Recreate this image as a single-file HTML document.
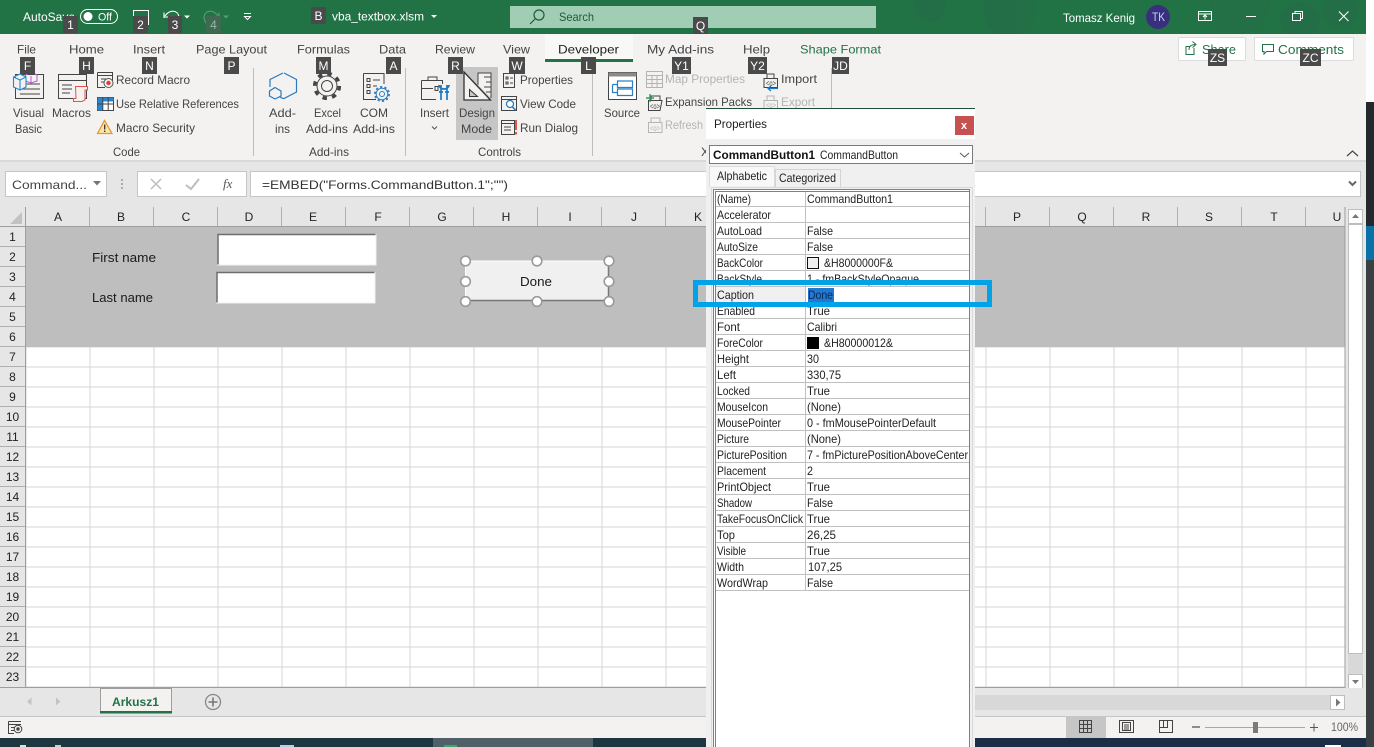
<!DOCTYPE html>
<html lang="en"><head><meta charset="utf-8"><title>Excel - vba_textbox.xlsm</title>
<style>
html,body{margin:0;padding:0;width:1374px;height:747px;overflow:hidden;background:#f3f2f1}
svg{display:block}
text{font-family:"Liberation Sans",sans-serif;font-size:12px;fill:#444;white-space:pre}
.w text,text.w{fill:#fff}
.g text{fill:#b4b4b4}
.p text{fill:#222}
.h text{fill:#222;text-anchor:middle}
.k rect{fill:#4a4a4a}
.k text{fill:#fff;text-anchor:middle;font-size:12px}
.i{fill:none;stroke:#444;stroke-width:1}
.b{fill:none;stroke:#2a80c8;stroke-width:1.2}
.n{fill:none;stroke:#b4b4b4;stroke-width:1}
</style></head><body>
<svg width="1374" height="747" viewBox="0 0 1374 747" xmlns="http://www.w3.org/2000/svg">
<defs>
<pattern id="grid" patternUnits="userSpaceOnUse" x="25.5" y="226.5" width="64" height="20"><path d="M0 .5H64M.5 0V20" stroke="#d4d4d4" fill="none"/></pattern>
</defs>
<!-- right desktop edge -->
<rect x="1366" y="0" width="8" height="102" fill="#fff"/>
<rect x="1366" y="102" width="8" height="645" fill="#22282c"/>
<rect x="1366" y="226" width="8" height="34" fill="#0a70a8"/>
<rect x="1366" y="260" width="8" height="487" fill="#3a3f44"/>
<!-- title bar -->
<rect width="1366" height="34" fill="#217346"/>
<g fill="#246e46" opacity=".8"><circle cx="1010" cy="10" r="26"/><circle cx="1240" cy="4" r="30"/><circle cx="1300" cy="22" r="20"/><circle cx="1340" cy="10" r="18"/><circle cx="930" cy="6" r="16"/></g>
<text class="w" x="23" y="21" textLength="52" lengthAdjust="spacingAndGlyphs">AutoSave</text>
<rect x="80.5" y="9.5" width="37" height="14" rx="7" fill="none" stroke="#fff"/>
<circle cx="88" cy="16.5" r="4.5" fill="#fff"/>
<text class="w" x="98" y="20.5" font-size="11" style="font-size:11px" textLength="14" lengthAdjust="spacingAndGlyphs">Off</text>
<path d="M133.500 25V10.500H148.500V25" fill="none" stroke="#fff"/>
<path d="M164 12.500V18M164 17H171M165 16C170 9 178 10 179 17C179 20 178 22 176 24" fill="none" stroke="#fff" stroke-width="1.100"/>
<path d="M184 15.500H190L187 18.500Z" fill="#fff"/>
<path d="M219 12.500V18M219 17H212M218 16C213 9 205 10 204 17C204 20 205 22 207 24" fill="none" stroke="#5e9a79" stroke-width="1.100"/>
<path d="M223 15.500H229L226 18.500Z" fill="#5e9a79"/>
<path d="M244 13.500H251" stroke="#fff"/>
<path d="M244.500 16.500H250.500L247.500 19.500Z" fill="none" stroke="#fff"/>
<text class="w" x="332" y="20.500" textLength="92" lengthAdjust="spacingAndGlyphs">vba_textbox.xlsm</text>
<path d="M431 15H437L434 18Z" fill="#fff"/>
<rect x="510" y="6" width="366" height="22" fill="#a1cdb5"/>
<circle cx="539" cy="15" r="5" fill="none" stroke="#1d5c3a" stroke-width="1.200"/><path d="M535 19L530 24" stroke="#1d5c3a" stroke-width="1.200"/>
<text x="559" y="21" textLength="35" lengthAdjust="spacingAndGlyphs" style="fill:#1d5c3a">Search</text>
<text class="w" x="1063" y="22" textLength="72" lengthAdjust="spacingAndGlyphs">Tomasz Kenig</text>
<circle cx="1158" cy="17" r="12" fill="#3a2f7e"/>
<text x="1152" y="21" textLength="13" lengthAdjust="spacingAndGlyphs" style="fill:#bcd8f2">TK</text>
<path d="M1198.500 11.500H1211.500V20.500H1198.500ZM1198.500 14H1211.500M1205 19.500V15.500M1203 17L1205 15L1207 17" fill="none" stroke="#fff"/>
<path d="M1246 16.500H1256" stroke="#fff"/>
<path d="M1292.500 13.500H1300.500V20.500H1292.500ZM1295 13V11.500H1302.500V18.500H1301" fill="none" stroke="#fff"/>
<path d="M1339 11.500L1348.500 21M1348.500 11.500L1339 21" stroke="#fff" stroke-width="1.100"/>
<!-- ribbon -->
<rect y="34" width="1366" height="126" fill="#f3f2f1"/>
<rect y="160" width="1366" height="5" fill="#d5d5d4"/>
<rect y="162" width="1366" height="556" fill="#e6e6e6"/>
<rect y="160" width="1366" height="2" fill="#d8d8d7"/>
<rect x="545" y="34" width="88" height="25" fill="#f8f8f6"/>
<rect x="545" y="59" width="88" height="3" fill="#217346"/>
<g>
<text x="17" y="53.500" textLength="19" lengthAdjust="spacingAndGlyphs">File</text>
<text x="69" y="53.500" textLength="35" lengthAdjust="spacingAndGlyphs">Home</text>
<text x="133" y="53.500" textLength="32" lengthAdjust="spacingAndGlyphs">Insert</text>
<text x="196" y="53.500" textLength="71" lengthAdjust="spacingAndGlyphs">Page Layout</text>
<text x="297" y="53.500" textLength="53" lengthAdjust="spacingAndGlyphs">Formulas</text>
<text x="379" y="53.500" textLength="27" lengthAdjust="spacingAndGlyphs">Data</text>
<text x="435" y="53.500" textLength="40" lengthAdjust="spacingAndGlyphs">Review</text>
<text x="503" y="53.500" textLength="27" lengthAdjust="spacingAndGlyphs">View</text>
<text x="558" y="53.500" textLength="61" lengthAdjust="spacingAndGlyphs" style="fill:#222">Developer</text>
<text x="647" y="53.500" textLength="67" lengthAdjust="spacingAndGlyphs">My Add-ins</text>
<text x="743" y="53.500" textLength="27" lengthAdjust="spacingAndGlyphs">Help</text>
<text x="800" y="53.500" textLength="81" lengthAdjust="spacingAndGlyphs" style="fill:#217346">Shape Format</text>
<text x="13" y="117" textLength="31" lengthAdjust="spacingAndGlyphs">Visual</text>
<text x="15" y="133" textLength="27" lengthAdjust="spacingAndGlyphs">Basic</text>
<text x="52" y="117" textLength="39" lengthAdjust="spacingAndGlyphs">Macros</text>
<text x="116" y="84" textLength="74" lengthAdjust="spacingAndGlyphs">Record Macro</text>
<text x="116" y="108" textLength="123" lengthAdjust="spacingAndGlyphs">Use Relative References</text>
<text x="116" y="132" textLength="79" lengthAdjust="spacingAndGlyphs">Macro Security</text>
<text x="113" y="156" textLength="27" lengthAdjust="spacingAndGlyphs">Code</text>
<text x="269" y="117" textLength="27" lengthAdjust="spacingAndGlyphs">Add-</text>
<text x="275" y="133" textLength="15" lengthAdjust="spacingAndGlyphs">ins</text>
<text x="314" y="117" textLength="27" lengthAdjust="spacingAndGlyphs">Excel</text>
<text x="306" y="133" textLength="42" lengthAdjust="spacingAndGlyphs">Add-ins</text>
<text x="360" y="117" textLength="28" lengthAdjust="spacingAndGlyphs">COM</text>
<text x="353" y="133" textLength="42" lengthAdjust="spacingAndGlyphs">Add-ins</text>
<text x="309" y="156" textLength="40" lengthAdjust="spacingAndGlyphs">Add-ins</text>
<text x="420" y="117" textLength="29" lengthAdjust="spacingAndGlyphs">Insert</text>
</g>
<rect x="456" y="67" width="42" height="73" fill="#c6c6c6"/>
<g>
<text x="459" y="117" textLength="36" lengthAdjust="spacingAndGlyphs">Design</text>
<text x="461" y="133" textLength="31" lengthAdjust="spacingAndGlyphs">Mode</text>
<text x="520" y="84" textLength="53" lengthAdjust="spacingAndGlyphs">Properties</text>
<text x="520" y="108" textLength="56" lengthAdjust="spacingAndGlyphs">View Code</text>
<text x="520" y="132" textLength="58" lengthAdjust="spacingAndGlyphs">Run Dialog</text>
<text x="478" y="156" textLength="43" lengthAdjust="spacingAndGlyphs">Controls</text>
<text x="604" y="117" textLength="36" lengthAdjust="spacingAndGlyphs">Source</text>
<text x="665" y="106" textLength="87" lengthAdjust="spacingAndGlyphs">Expansion Packs</text>
<text x="781" y="83" textLength="36" lengthAdjust="spacingAndGlyphs">Import</text>
<text x="701" y="156" textLength="7">X</text>
</g>
<g class="g">
<text x="665" y="83" textLength="80" lengthAdjust="spacingAndGlyphs">Map Properties</text>
<text x="665" y="129" textLength="38" lengthAdjust="spacingAndGlyphs">Refresh</text>
<text x="781" y="106" textLength="34" lengthAdjust="spacingAndGlyphs">Export</text>
</g>
<path d="M253.500 68V156M405.500 68V156M592.500 68V156M831.500 68V112" stroke="#bdbdbd"/>
<!-- ribbon icons -->
<g>
<path class="i" d="M15.500 74.500H43.500V98.500H15.500ZM24 84H40M20 89H40M20 94H40"/>
<path d="M25.500 75L31 72L37 75V81L31 83L25.500 81ZM31 76V83" fill="none" stroke="#b25fc8"/>
<path d="M13.500 77L20 74L26 77V87L20 90L13.500 87ZM13.500 77L20 80L26 77M20 80V90" fill="#f3f2f1" stroke="#2a86d0" stroke-width="1.100"/>
<path class="i" d="M58.500 74.500H86.500V98.500H58.500ZM58.500 80.500H86.500M62 85H72M62 89H72M62 93H70"/>
<path d="M75.500 86.500H87.500V90H85V100L82 101.500H73.500V98.500H76Z" fill="#f3f2f1" stroke="#e8504a"/>
<path class="i" d="M97.500 72.500H112.500V85M97.500 72.500V87.500H105M97.500 75.500H112.500M101 79H106M101 82H104"/>
<circle cx="108.500" cy="83" r="4.500" fill="#f3f2f1" stroke="#555"/><circle cx="108.500" cy="83" r="2.200" fill="#e03c32"/>
<rect x="97.500" y="97.500" width="16" height="13" fill="#fff" stroke="#444"/>
<rect x="97.500" y="97.500" width="16" height="4" fill="#2a86d0"/><rect x="97.500" y="101.500" width="5" height="9" fill="#2a86d0"/>
<path d="M102.800 97.500V110.500M108.200 97.500V110.500M97.500 104H113.500" stroke="#444"/>
<path d="M104.500 120.500L112 133.500H97.500Z" fill="#fbe6a8" stroke="#e8963a" stroke-width="1.300"/>
<path d="M104.700 124.500V129.500M104.700 130.500V132" stroke="#333" stroke-width="1.300"/>
<path d="M284 73L296.500 79.500V92L284 98.500H283L278 96M270 87V79.500L283 73" fill="none" stroke="#2a7ac0" stroke-width="1.200"/>
<path d="M275 87.500L281 91V96L275 99L269.500 96V91Z" fill="#f3f2f1" stroke="#2a7ac0" stroke-width="1.200"/>
<circle cx="327" cy="86" r="10" fill="none" stroke="#444"/>
<circle cx="327" cy="86" r="12.300" fill="none" stroke="#444" stroke-width="3.600" stroke-dasharray="4.400 5.250"/>
<circle cx="327" cy="86" r="5.500" fill="#f3f2f1" stroke="#444"/>
<path class="i" d="M363.500 73.500H384V84M363.500 73.500V99.500H376M367 78.500H370V81.500H367ZM367 84.500H370V87.500H367ZM367 90.500H370V93.500H367ZM373 80H380M373 86H377"/>
<circle cx="382" cy="94" r="5.800" fill="#f3f2f1" stroke="#2a80c8"/>
<circle cx="382" cy="94" r="7" fill="none" stroke="#2a80c8" stroke-width="2" stroke-dasharray="2.200 2.200"/>
<circle cx="382" cy="94" r="2.500" fill="none" stroke="#2a80c8"/>
<path d="M432 124.500L434.500 127L437 124.500" fill="none" stroke="#555" transform="translate(0 2)"/>
<path class="i" d="M421.500 80.500H442.500V84M421.500 80.500V99.500H436M428 80V77H437V80M421.500 88.500H433M435 86.500H438V90.500H435Z"/>
<path d="M441 85V100M447 85V100M439 85C439 88 443 89 443 89H445C445 89 449 88 449 85M439 92H443M445 92H449" fill="none" stroke="#1c78c0" stroke-width="1.700"/>
<path d="M464 72L490.500 100H464Z" fill="#f3f2f1" stroke="#333" stroke-width="1.300"/>
<path d="M469.500 89.500L477.500 96.500H469.500Z" fill="#c6c6c6" stroke="#333"/>
<path d="M478 85V73H491V98" fill="#f3f2f1" stroke="#444"/><path d="M484 77H491M486 82H491M484 87H491M486 92H491" stroke="#444"/>
<path class="i" d="M503.500 73.500H514.500V87.500H503.500ZM506 77H508V79H506ZM506 82H508V84H506ZM510 78H513M510 83H513"/>
<path class="i" d="M501.500 96.500H516.500V110.500H501.500ZM501.500 99.500H516.500"/>
<circle cx="510" cy="104" r="3.500" fill="#fff" stroke="#1c78c0" stroke-width="1.200"/><path d="M512.500 107L516 110.500" stroke="#1c78c0" stroke-width="1.500"/>
<path class="i" d="M501.500 120.500H514.500V134.500H501.500ZM501.500 123.500H514.500M504 127H511M504 130H511"/>
<path d="M516 120V130M516 132V134.500" stroke="#e03c32" stroke-width="1.700"/>
<rect x="608.500" y="72.500" width="28" height="27" fill="#fff" stroke="#444"/>
<rect x="608.500" y="72.500" width="28" height="4" fill="#8a8a8a"/>
<path class="b" d="M617.500 81H632.500V87.500H617.500ZM617.500 89H632.500V95.500H617.500ZM612.500 84.500H617.500M612.500 84.500V92.500H617.500"/>
<path class="n" d="M646.500 71.500H662.500V87.500H646.500ZM646.500 75.500H662.500M652 75.500V87.500M657 75.500V87.500M646.500 79.500H662.500M646.500 83.500H662.500"/>
<path class="i" d="M648.500 100.500H662L660 110.500H648.500ZM651 100V96H660V100"/>
<text x="650" y="109" style="font-size:8px;fill:#444" textLength="10" lengthAdjust="spacingAndGlyphs">&lt;o&gt;</text>
<path d="M650 94V102M646 98H654" stroke="#2e9e5b" stroke-width="1.400"/>
<path class="n" d="M648.500 122.500H662V132.500H648.500ZM651 122V118H660V122"/>
<text x="650" y="131" style="font-size:8px;fill:#b4b4b4" textLength="10" lengthAdjust="spacingAndGlyphs">&lt;o&gt;</text>
<path class="i" d="M764 78.500H777.500V87.500H764ZM767 78V74H774V78"/>
<text x="766" y="86" style="font-size:8px;fill:#444" textLength="10" lengthAdjust="spacingAndGlyphs">&lt;o&gt;</text>
<path d="M778 88.500H768M771 86L768 88.500L771 91" fill="none" stroke="#1c78c0" stroke-width="1.200"/>
<path class="n" d="M764 100.500H777.500V109.500H764ZM767 100V96H774V100"/>
<text x="766" y="108" style="font-size:8px;fill:#b4b4b4" textLength="10" lengthAdjust="spacingAndGlyphs">&lt;o&gt;</text>
</g>
<!-- share / comments -->
<rect x="1178.500" y="37.500" width="67" height="23" rx="1" fill="#fff" stroke="#dcdcdc"/>
<rect x="1254.500" y="37.500" width="99" height="23" rx="1" fill="#fff" stroke="#dcdcdc"/>
<path d="M1194 48V54.500H1186V46.500H1190M1189 50C1189 46 1192 44.500 1195 44.500M1192.500 41.500L1196 44.500L1192.500 47.500" fill="none" stroke="#217346"/>
<path d="M1262.500 44.500H1273.500V51.500H1266.500L1264 54V51.500H1262.500Z" fill="none" stroke="#217346"/>
<text x="1202" y="54" textLength="34" lengthAdjust="spacingAndGlyphs" style="fill:#217346;font-size:13px">Share</text>
<text x="1278" y="54" textLength="66" lengthAdjust="spacingAndGlyphs" style="fill:#217346;font-size:13px">Comments</text>
<path d="M1347 156L1352.500 151L1358 156" fill="none" stroke="#444" stroke-width="1.200"/>
<!-- formula bar -->
<rect x="5.500" y="171.500" width="101" height="25" fill="#fff" stroke="#c6c6c6"/>
<text x="12" y="189" textLength="75" lengthAdjust="spacingAndGlyphs">Command...</text>
<path d="M93 181H101L97 185.500Z" fill="#777"/>
<path d="M122 179V181M122 183V185M122 187V189" stroke="#aaa" stroke-width="2"/>
<rect x="137.500" y="171.500" width="109" height="25" fill="#fff" stroke="#c6c6c6"/>
<path d="M151 179L161 189M161 179L151 189" stroke="#bdbdbd" stroke-width="1.500"/>
<path d="M186 185L191 189L199 179" fill="none" stroke="#bdbdbd" stroke-width="2"/>
<text x="223" y="188" style="font-family:'Liberation Serif',serif;font-style:italic;font-size:13px;fill:#555">fx</text>
<rect x="250.500" y="171.500" width="1110" height="25" fill="#fff" stroke="#c6c6c6"/>
<text x="262" y="189" textLength="246" lengthAdjust="spacingAndGlyphs" style="fill:#333">=EMBED("Forms.CommandButton.1";"")</text>
<path d="M1349 181.500L1352.500 185L1356 181.500" fill="none" stroke="#666" stroke-width="2"/>
<!-- sheet -->
<rect x="26" y="227" width="1319" height="460" fill="#fff"/>
<rect x="26" y="227" width="1319" height="460" fill="url(#grid)"/>
<rect x="26" y="227" width="1319" height="120" fill="#bebebe"/>
<path d="M1345 207V687.500H0" fill="none" stroke="#9e9e9e"/>
<path d="M0 226.500H1345M25.500 207V687" stroke="#9e9e9e" fill="none"/>
<path d="M89.500 207V226M153.500 207V226M217.500 207V226M281.500 207V226M345.500 207V226M409.500 207V226M473.500 207V226M537.500 207V226M601.500 207V226M665.500 207V226M985.500 207V226M1049.500 207V226M1113.500 207V226M1177.500 207V226M1241.500 207V226M1305.500 207V226" stroke="#b0b0b0"/>
<path d="M0 246.500H25M0 266.500H25M0 286.500H25M0 306.500H25M0 326.500H25M0 346.500H25M0 366.500H25M0 386.500H25M0 406.500H25M0 426.500H25M0 446.500H25M0 466.500H25M0 486.500H25M0 506.500H25M0 526.500H25M0 546.500H25M0 566.500H25M0 586.500H25M0 606.500H25M0 626.500H25M0 646.500H25M0 666.500H25" stroke="#b0b0b0"/>
<path d="M22 212V224H10Z" fill="#c2c2c2"/>
<g class="h">
<text x="58" y="221">A</text><text x="121" y="221">B</text><text x="186" y="221">C</text><text x="249" y="221">D</text><text x="313" y="221">E</text><text x="378" y="221">F</text><text x="442" y="221">G</text><text x="506" y="221">H</text><text x="570" y="221">I</text><text x="634" y="221">J</text><text x="698" y="221">K</text><text x="1017" y="221">P</text><text x="1082" y="221">Q</text><text x="1146" y="221">R</text><text x="1209" y="221">S</text><text x="1274" y="221">T</text><text x="1337" y="221">U</text>
<text x="12.500" y="241">1</text><text x="12.500" y="261">2</text><text x="12.500" y="281">3</text><text x="12.500" y="301">4</text><text x="12.500" y="321">5</text><text x="12.500" y="341">6</text><text x="12.500" y="361">7</text><text x="12.500" y="381">8</text><text x="12.500" y="401">9</text><text x="12.500" y="421">10</text><text x="12.500" y="441">11</text><text x="12.500" y="461">12</text><text x="12.500" y="481">13</text><text x="12.500" y="501">14</text><text x="12.500" y="521">15</text><text x="12.500" y="541">16</text><text x="12.500" y="561">17</text><text x="12.500" y="581">18</text><text x="12.500" y="601">19</text><text x="12.500" y="621">20</text><text x="12.500" y="641">21</text><text x="12.500" y="661">22</text><text x="12.500" y="681">23</text>
</g>
<!-- controls on sheet -->
<text x="92" y="262" textLength="64" lengthAdjust="spacingAndGlyphs" style="font-size:13px;fill:#1a1a1a">First name</text>
<text x="92" y="302" textLength="61" lengthAdjust="spacingAndGlyphs" style="font-size:13px;fill:#1a1a1a">Last name</text>
<rect x="218" y="235" width="158" height="30" fill="#fff"/>
<path d="M218 264.500V234.500H375.500" fill="none" stroke="#6e6e6e" stroke-width="1.500"/>
<path d="M217 265H376V234" fill="none" stroke="#f0f0f0" stroke-width="1"/>
<rect x="217" y="273" width="158" height="30" fill="#fff"/>
<path d="M217 302.500V272.500H374.500" fill="none" stroke="#6e6e6e" stroke-width="1.500"/>
<path d="M216 303H375V272" fill="none" stroke="#f0f0f0" stroke-width="1"/>
<rect x="465.500" y="261" width="143" height="40" fill="#f0f0f0"/>
<path d="M465.500 301V261H608" fill="none" stroke="#fff" stroke-width="1"/>
<path d="M465.500 300.500H608.500V261" fill="none" stroke="#777" stroke-width="1.500"/>
<text x="520" y="286" textLength="32" lengthAdjust="spacingAndGlyphs" style="font-size:13px;fill:#1a1a1a">Done</text>
<g fill="#fff" stroke="#9a9a9a" stroke-width="1.600">
<circle cx="465.500" cy="261" r="4.800"/><circle cx="537" cy="261" r="4.800"/><circle cx="609" cy="261" r="4.800"/>
<circle cx="465.500" cy="281.500" r="4.800"/><circle cx="609" cy="281.500" r="4.800"/>
<circle cx="465.500" cy="301.500" r="4.800"/><circle cx="537" cy="301.500" r="4.800"/><circle cx="609" cy="301.500" r="4.800"/>
</g>
<!-- vertical scrollbar -->
<rect x="1348" y="209" width="15" height="480" fill="#d8d8d8"/>
<rect x="1348.500" y="209.500" width="14" height="14" fill="#fff" stroke="#bdbdbd"/>
<rect x="1348.500" y="224.500" width="14" height="429" fill="#fff" stroke="#bdbdbd"/>
<rect x="1348.500" y="674.500" width="14" height="14" fill="#fff" stroke="#bdbdbd"/>
<path d="M1352 218H1359L1355.500 214Z" fill="#777"/>
<path d="M1352 680H1359L1355.500 684Z" fill="#777"/>
<!-- sheet tabs -->
<rect x="0" y="688" width="1366" height="28" fill="#e6e6e6"/>
<path d="M0 687.500H100" stroke="#9e9e9e"/>
<path d="M172 687.500H1345" stroke="#9e9e9e"/>
<path d="M100.500 712V688.500H171.500V712" fill="#f3f2f1" stroke="#9e9e9e"/>
<rect x="100" y="711" width="72" height="2.500" fill="#217346"/>
<text x="112" y="706" textLength="47" lengthAdjust="spacingAndGlyphs" style="font-weight:bold;fill:#217346">Arkusz1</text>
<path d="M31.500 697.500V705.500L27 701.500Z" fill="#c4c4c4"/><path d="M56 697.500V705.500L60.500 701.500Z" fill="#c4c4c4"/>
<circle cx="213" cy="702" r="7.500" fill="none" stroke="#888" stroke-width="1.300"/>
<path d="M213 697.500V706.500M208.500 702H217.500" stroke="#777" stroke-width="1.600"/>
<rect x="975" y="695" width="355" height="15" fill="#d8d8d8"/>
<rect x="1330.500" y="695.500" width="14" height="14" fill="#fff" stroke="#bdbdbd"/>
<path d="M1336 698.500V706.500L1340.500 702.500Z" fill="#777"/>
<!-- status bar -->
<rect x="0" y="716" width="1366" height="22" fill="#f3f2f1"/>
<path d="M0 716.500H1366" stroke="#c6c6c6"/>
<path class="i" d="M8.500 721.500H21M8.500 721.500V733.500H14M8.500 724.500H21M11 727.500H14M11 730.500H14"/>
<circle cx="18" cy="729" r="3.800" fill="none" stroke="#444"/><circle cx="18" cy="729" r="1.700" fill="#444"/>
<rect x="1066" y="717" width="40" height="21" fill="#c6c6c6"/>
<path class="i" d="M1079.500 720.500H1091.500V732.500H1079.500ZM1083.500 720.500V732.500M1087.500 720.500V732.500M1079.500 724.500H1091.500M1079.500 728.500H1091.500"/>
<path class="i" d="M1119.500 720.500H1133.500V732.500H1119.500ZM1122.500 722.500H1130.500V730.500H1122.500ZM1124 725H1129M1124 727H1129M1124 729H1129"/>
<path class="i" d="M1159.500 720.500H1172.500V732.500H1159.500ZM1159.500 727.500H1167.500V720.500M1163.500 720.500V727.500"/>
<path d="M1192 727H1200" stroke="#555" stroke-width="1.300"/>
<path d="M1205 727.500H1305" stroke="#a8a8a8"/>
<rect x="1253" y="722" width="5" height="11" fill="#7a7a7a"/>
<path d="M1310 727.500H1318M1314 723.500V731.500" stroke="#555" stroke-width="1"/>
<text x="1331" y="731" textLength="27" lengthAdjust="spacingAndGlyphs" style="fill:#666">100%</text>
<!-- taskbar -->
<rect x="0" y="738" width="706" height="9" fill="#1e3640"/>
<rect x="433" y="738" width="160" height="9" fill="#4f6068"/>
<rect x="975" y="738" width="391" height="9" fill="#1c2e45"/>
<rect x="1325" y="745" width="16" height="2" fill="#fff"/>
<rect x="20" y="745" width="6" height="2" fill="#ddd"/><rect x="55" y="745" width="6" height="2" fill="#ccc"/><rect x="280" y="745" width="14" height="2" fill="#b8cdea"/><rect x="444" y="745" width="13" height="2" fill="#3aa76d"/>
<!-- properties window -->
<rect x="706" y="108" width="269" height="639" fill="#f0f0f0"/>
<rect x="706" y="108" width="269" height="1" fill="#1f4f38"/>
<rect x="706" y="109" width="269" height="30" fill="#fff"/>
<text x="714" y="128" textLength="53" lengthAdjust="spacingAndGlyphs" style="fill:#222">Properties</text>
<rect x="955" y="116" width="19" height="19" fill="#c75050"/>
<text x="961" y="129" style="fill:#fff;font-weight:bold;font-size:11px">x</text>
<rect x="709.500" y="145.500" width="263" height="18" fill="#fff" stroke="#7a7a7a"/>
<text x="713" y="159" textLength="102" lengthAdjust="spacingAndGlyphs" style="font-weight:bold;fill:#111">CommandButton1</text>
<text x="820" y="159" textLength="78" lengthAdjust="spacingAndGlyphs" style="fill:#222">CommandButton</text>
<path d="M960 153L964.500 157L969 153" fill="none" stroke="#555"/>
<path d="M775.500 187V169.500H840.500V187" fill="#f0f0f0" stroke="#d4d4d4"/>
<path d="M709.500 187V166.500H774.500V187" fill="#f8f8f8" stroke="#dcdcdc"/>
<rect x="710" y="186" width="64" height="2" fill="#f0f0f0"/>
<text x="717" y="180" textLength="50" lengthAdjust="spacingAndGlyphs" style="fill:#222">Alphabetic</text>
<text x="779" y="182" textLength="57" lengthAdjust="spacingAndGlyphs" style="fill:#222">Categorized</text>
<rect x="711.500" y="187.500" width="261" height="560" fill="none" stroke="#dadada"/>
<rect x="713.500" y="189.500" width="256" height="560" fill="#fff" stroke="#808080"/>
<rect x="715.500" y="191.500" width="254" height="560" fill="#fff" stroke="#808080"/>
<rect x="716" y="287" width="89" height="16" fill="#f0f0f0"/>
<path d="M716 206.500H969M716 222.500H969M716 238.500H969M716 254.500H969M716 270.500H969M716 286.500H969M716 302.500H969M716 318.500H969M716 334.500H969M716 350.500H969M716 366.500H969M716 382.500H969M716 398.500H969M716 414.500H969M716 430.500H969M716 446.500H969M716 462.500H969M716 478.500H969M716 494.500H969M716 510.500H969M716 526.500H969M716 542.500H969M716 558.500H969M716 574.500H969M716 590.500H969M805.500 192V590" stroke="#c0c0c0" fill="none"/>
<g class="p">
<text x="717" y="203" textLength="34" lengthAdjust="spacingAndGlyphs">(Name)</text>
<text x="717" y="219" textLength="54" lengthAdjust="spacingAndGlyphs">Accelerator</text>
<text x="717" y="235" textLength="45" lengthAdjust="spacingAndGlyphs">AutoLoad</text>
<text x="717" y="251" textLength="41" lengthAdjust="spacingAndGlyphs">AutoSize</text>
<text x="717" y="267" textLength="46" lengthAdjust="spacingAndGlyphs">BackColor</text>
<text x="717" y="283" textLength="45" lengthAdjust="spacingAndGlyphs">BackStyle</text>
<text x="717" y="299" textLength="37" lengthAdjust="spacingAndGlyphs">Caption</text>
<text x="717" y="315" textLength="38" lengthAdjust="spacingAndGlyphs">Enabled</text>
<text x="717" y="331" textLength="23" lengthAdjust="spacingAndGlyphs">Font</text>
<text x="717" y="347" textLength="46" lengthAdjust="spacingAndGlyphs">ForeColor</text>
<text x="717" y="363" textLength="32" lengthAdjust="spacingAndGlyphs">Height</text>
<text x="717" y="379" textLength="19" lengthAdjust="spacingAndGlyphs">Left</text>
<text x="717" y="395" textLength="33" lengthAdjust="spacingAndGlyphs">Locked</text>
<text x="717" y="411" textLength="51" lengthAdjust="spacingAndGlyphs">MouseIcon</text>
<text x="717" y="427" textLength="64" lengthAdjust="spacingAndGlyphs">MousePointer</text>
<text x="717" y="443" textLength="32" lengthAdjust="spacingAndGlyphs">Picture</text>
<text x="717" y="459" textLength="70" lengthAdjust="spacingAndGlyphs">PicturePosition</text>
<text x="717" y="475" textLength="49" lengthAdjust="spacingAndGlyphs">Placement</text>
<text x="717" y="491" textLength="54" lengthAdjust="spacingAndGlyphs">PrintObject</text>
<text x="717" y="507" textLength="35" lengthAdjust="spacingAndGlyphs">Shadow</text>
<text x="717" y="523" textLength="86" lengthAdjust="spacingAndGlyphs">TakeFocusOnClick</text>
<text x="717" y="539" textLength="18" lengthAdjust="spacingAndGlyphs">Top</text>
<text x="717" y="555" textLength="29" lengthAdjust="spacingAndGlyphs">Visible</text>
<text x="717" y="571" textLength="27" lengthAdjust="spacingAndGlyphs">Width</text>
<text x="717" y="587" textLength="51" lengthAdjust="spacingAndGlyphs">WordWrap</text>
<text x="807" y="203" textLength="86" lengthAdjust="spacingAndGlyphs">CommandButton1</text>
<text x="807" y="235" textLength="26" lengthAdjust="spacingAndGlyphs">False</text>
<text x="807" y="251" textLength="26" lengthAdjust="spacingAndGlyphs">False</text>
<text x="824" y="267" textLength="69" lengthAdjust="spacingAndGlyphs">&amp;H8000000F&amp;</text>
<text x="807" y="283" textLength="112" lengthAdjust="spacingAndGlyphs">1 - fmBackStyleOpaque</text>
<text x="807" y="315" textLength="23" lengthAdjust="spacingAndGlyphs">True</text>
<text x="807" y="331" textLength="30" lengthAdjust="spacingAndGlyphs">Calibri</text>
<text x="824" y="347" textLength="69" lengthAdjust="spacingAndGlyphs">&amp;H80000012&amp;</text>
<text x="807" y="363" textLength="12" lengthAdjust="spacingAndGlyphs">30</text>
<text x="807" y="379" textLength="34" lengthAdjust="spacingAndGlyphs">330,75</text>
<text x="807" y="395" textLength="23" lengthAdjust="spacingAndGlyphs">True</text>
<text x="807" y="411" textLength="34" lengthAdjust="spacingAndGlyphs">(None)</text>
<text x="807" y="427" textLength="129" lengthAdjust="spacingAndGlyphs">0 - fmMousePointerDefault</text>
<text x="807" y="443" textLength="34" lengthAdjust="spacingAndGlyphs">(None)</text>
<text x="807" y="459" textLength="161" lengthAdjust="spacingAndGlyphs">7 - fmPicturePositionAboveCenter</text>
<text x="807" y="475" textLength="6" lengthAdjust="spacingAndGlyphs">2</text>
<text x="807" y="491" textLength="23" lengthAdjust="spacingAndGlyphs">True</text>
<text x="807" y="507" textLength="26" lengthAdjust="spacingAndGlyphs">False</text>
<text x="807" y="523" textLength="23" lengthAdjust="spacingAndGlyphs">True</text>
<text x="807" y="539" textLength="29" lengthAdjust="spacingAndGlyphs">26,25</text>
<text x="807" y="555" textLength="23" lengthAdjust="spacingAndGlyphs">True</text>
<text x="808" y="571" textLength="34" lengthAdjust="spacingAndGlyphs">107,25</text>
<text x="807" y="587" textLength="26" lengthAdjust="spacingAndGlyphs">False</text>
</g>
<rect x="807.500" y="257.500" width="11" height="11" fill="#f0f0f0" stroke="#111"/>
<rect x="807" y="337" width="12" height="12" fill="#000"/>
<rect x="808" y="288" width="26" height="14" fill="#1f78d1"/>
<text x="808" y="299" textLength="25" lengthAdjust="spacingAndGlyphs" style="fill:#0b2a52">Done</text>
<!-- highlight frame -->
<rect x="695.500" y="282.500" width="294" height="22" fill="none" stroke="#00a2e8" stroke-width="5"/>
<!-- key tips -->
<g class="k">
<rect x="63" y="16" width="15" height="17"/><text x="70.500" y="29">1</text>
<rect x="133" y="16" width="15" height="17"/><text x="140.500" y="29">2</text>
<rect x="168" y="16" width="14" height="17"/><text x="175" y="29">3</text>
<rect x="206" y="16" width="15" height="17" style="fill:#3f6a52"/><text x="213.500" y="29" style="fill:#9ab5a6">4</text>
<rect x="311" y="7" width="15" height="17"/><text x="318.500" y="20">B</text>
<rect x="693" y="17" width="15" height="17"/><text x="700.500" y="30">Q</text>
<rect x="20" y="57" width="15" height="17"/><text x="27.500" y="70">F</text>
<rect x="79" y="57" width="15" height="17"/><text x="86.500" y="70">H</text>
<rect x="142" y="57" width="15" height="17"/><text x="149.500" y="70">N</text>
<rect x="224" y="57" width="15" height="17"/><text x="231.500" y="70">P</text>
<rect x="316" y="57" width="15" height="17"/><text x="323.500" y="70">M</text>
<rect x="386" y="57" width="15" height="17"/><text x="393.500" y="70">A</text>
<rect x="448" y="57" width="15" height="17"/><text x="455.500" y="70">R</text>
<rect x="509" y="57" width="16" height="17"/><text x="517" y="70">W</text>
<rect x="581" y="57" width="15" height="17"/><text x="588.500" y="70">L</text>
<rect x="672" y="57" width="19" height="17"/><text x="681.500" y="70">Y1</text>
<rect x="748" y="57" width="19" height="17"/><text x="757.500" y="70">Y2</text>
<rect x="832" y="57" width="17" height="17"/><text x="840.500" y="70">JD</text>
<rect x="1208" y="49" width="19" height="17"/><text x="1217.500" y="62">ZS</text>
<rect x="1300" y="49" width="21" height="17"/><text x="1310.500" y="62">ZC</text>
</g>
</svg>
</body></html>
